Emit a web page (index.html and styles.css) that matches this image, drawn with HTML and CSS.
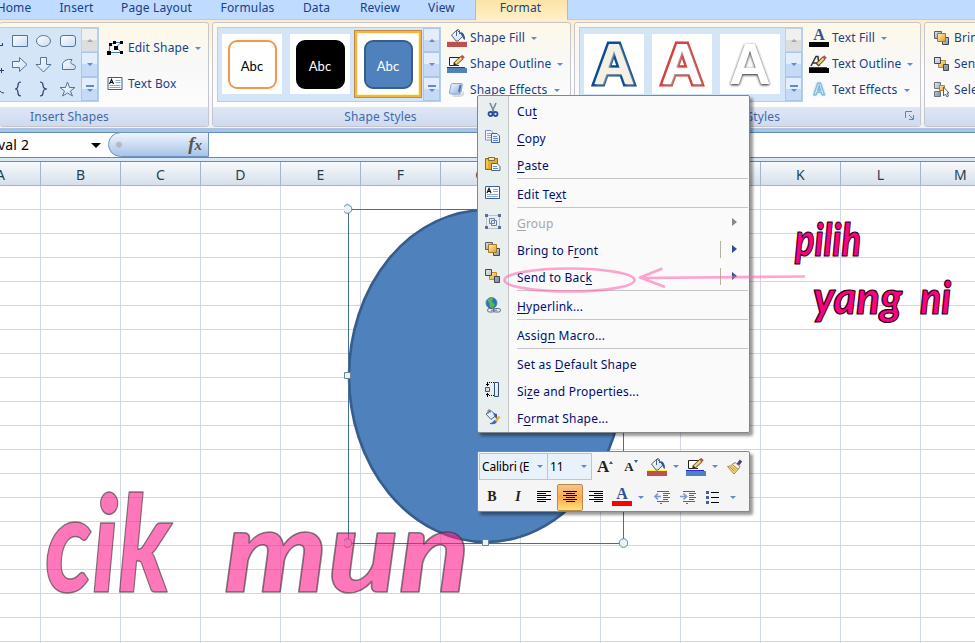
FILE: index.html
```html
<!DOCTYPE html>
<html lang="en">
<head>
    <meta charset="UTF-8">
    <title>Format Shape</title>
    <link rel="stylesheet" href="styles.css">
</head>
<body>
    <!-- Icons -->
    <svg class="defs">
        <defs>
            <linearGradient id="gold" x2="1" y2="1"><stop offset="0" stop-color="#fff0b8"/><stop offset="1" stop-color="#dc9c20"/></linearGradient>
            <linearGradient id="steel" x2="1" y2="1"><stop offset="0" stop-color="#e6ebf0"/><stop offset="1" stop-color="#7e8995"/></linearGradient>
            <linearGradient id="ice" x2="1" y2="1"><stop offset="0" stop-color="#fff"/><stop offset="1" stop-color="#c9dcf1"/></linearGradient>
            <linearGradient id="cube" x2="1" y2="1"><stop offset="0" stop-color="#f4f9ff"/><stop offset="1" stop-color="#8baee3"/></linearGradient>
        </defs>
        <symbol id="bucket" viewBox="0 0 20 13">
            <path d="M0 12.500h20" stroke="#ffef3a"/>
            <path d="M4.500 6 10 1l6 6-5 5H9z" fill="url(#ice)" stroke="#4a6285"/>
            <path d="M9.500 7V1.500q1.500-2 3 0V5" fill="none" stroke="#4a6285"/>
            <path d="M13 3q5 0 5 8-2-1-3-4z" fill="#33589b"/>
        </symbol>
        <symbol id="pencil" viewBox="0 0 20 13">
            <path d="M0 12.500h18" stroke="#2a2ae0"/>
            <path d="M14 2.500H2.500v8H12" fill="#fdfdfd" stroke="#222"/>
            <path d="M7.500 9.500 15 2.500" stroke="#5b4a20" stroke-width="4"/>
            <path d="M8.500 8.500 15 2.500" stroke="#f1d27a" stroke-width="2.400"/>
            <path d="m14.500 3 2-2" stroke="#b4564d" stroke-width="3.500"/>
            <path d="m6 11 1-3 2 2z" fill="#222"/>
        </symbol>
        <symbol id="textpencil" viewBox="0 0 20 13">
            <path d="M0 12.500h18" stroke="#2a2ae0"/>
            <path d="M2 11 7 1.500h2L10 11M4 8h5" fill="none" stroke="#333" stroke-width="1.500"/>
            <path d="M8 10 15 3" stroke="#5b4a20" stroke-width="4"/>
            <path d="m9 9 6-6" stroke="#f1d27a" stroke-width="2.400"/>
            <path d="m14.500 3.500 2-2" stroke="#b4564d" stroke-width="3.500"/>
        </symbol>
        <symbol id="effect" viewBox="0 0 16 16">
            <path d="M4 13h9l3-3v4l-3 2H5z" fill="#d9d9d9"/>
            <path d="M4.500 2.500H13q1.500 0 1.300 1.500L13 11q-.5 2-2 2H3q-2 0-1.500-2L3 4q.5-1.500 1.500-1.500z" fill="url(#cube)" stroke="#8ca5cf"/>
            <path d="m11 11 1.500-7" stroke="#5274b5" stroke-width="2"/>
        </symbol>
        <symbol id="front" viewBox="0 0 16 16">
            <path d="M.5 1.500h7v7h-7z" fill="url(#steel)" stroke="#56606b"/>
            <path d="M8.500 7.500h6v7h-6z" fill="url(#steel)" stroke="#3f4750"/>
            <path d="M3.500 3.500h8v8h-8z" fill="url(#gold)" stroke="#a57724"/>
        </symbol>
        <symbol id="back" viewBox="0 0 16 16">
            <path d="M4.500 4.500h7v7h-7z" fill="url(#gold)" stroke="#c08b2c"/>
            <path d="M.5 1.500h6v6h-6zM9.500 8.500h5v6h-5z" fill="url(#steel)" stroke="#3f4750"/>
        </symbol>
        <symbol id="pane" viewBox="0 0 16 16">
            <path d="M.5.5h6v6h-6zM.5 9.500h6v5h-6z" fill="url(#steel)" stroke="#6b747e"/>
            <path d="M5.500 3.500h5v5h-5z" fill="url(#gold)" stroke="#b0842c"/>
            <path d="M9.500 5v9l2-2 1.500 3 1.500-1-1.500-3H15z" fill="#fff" stroke="#506078"/>
        </symbol>
        <symbol id="editshape" viewBox="0 0 17 14">
            <path d="M3 3.500 7.500 1.500H14L9 6.500l5.500 5H2z" fill="#fff" stroke="#4677b8"/>
            <path d="M0 10h4v4H0zM2 2h3v3H2zM6 0h3v3H6zM13 0h3v3h-3zM7 5h4v4H7zM13 10h3v3h-3z"/>
        </symbol>
        <symbol id="textbox" viewBox="0 0 16 14">
            <path d="M.5.500h14v12H.5z" fill="#fff" stroke="#3c5f8c"/>
            <path d="M8 3.500h5M8 5.500h5M2 8.500h11M2 10.500h11" stroke="#8ba9d0"/>
            <path d="m2 7 2-4.500L6 7M3 5.500h2" fill="none" stroke="#111" stroke-width="1.200"/>
        </symbol>
        <symbol id="cut" viewBox="0 0 16 16">
            <path d="m5 1 4 9M11 1 7 10" stroke="#7688a0" stroke-width="1.600"/>
            <circle cx="5.500" cy="12" r="2" fill="none" stroke="#2c4f9c" stroke-width="1.800"/>
            <circle cx="10.500" cy="12" r="2" fill="none" stroke="#2c4f9c" stroke-width="1.800"/>
        </symbol>
        <symbol id="copy" viewBox="0 0 16 16">
            <path d="M.5 1.500H6l2.500 2.500v7h-8z" fill="#f3f8ff" stroke="#7792c0"/>
            <path d="M2 4.500h4M2 6.500h4M2 8.500h4" stroke="#8ba9d8"/>
            <path d="M6.500 4.500H12l2.500 2.500v6.500h-8z" fill="#eaf2ff" stroke="#3d62ae"/>
            <path d="M8 7.500h4M8 9.500h5M8 11.500h5" stroke="#6488ca"/>
        </symbol>
        <symbol id="paste" viewBox="0 0 16 16">
            <path d="M.5 2.500h12v11H.5z" fill="#e6ae28" stroke="#94690f"/>
            <path d="M2 4v8" stroke="#fbe08a"/>
            <path d="M3.500 1.500h6v3h-6z" fill="#f4e9a0" stroke="#80703a"/>
            <path d="M6.500 7.500H12l3 3v4H6.500z" fill="#f0f5fc" stroke="#52647e"/>
            <path d="M8 10.500h4M8 12.500h5" stroke="#7289ad"/>
        </symbol>
        <symbol id="group" viewBox="0 0 16 16">
            <path d="M1.500 1.500h13v13h-13z" fill="none" stroke="#8797b5" stroke-dasharray="1 1"/>
            <path d="M4.500 4.500h5v5h-5zM6.500 6.500h5v5h-5z" fill="none" stroke="#6c80a8"/>
            <path d="M0 0h3v3H0zM13 0h3v3h-3zM0 12h3v3H0zM13 12h3v3h-3z" fill="#5b6f98"/>
        </symbol>
        <symbol id="link" viewBox="0 0 16 16">
            <circle cx="6.500" cy="6" r="5.500" fill="#2d6fc0" stroke="#5488b5"/>
            <path d="M2 3q3-3 6-2L7 5l3 2-2 4-3-1-1-4z" fill="#58b457"/>
            <rect x="2.500" y="11.500" width="7" height="3.500" rx="1.700" fill="#e1e8ef" stroke="#5b708a"/>
            <rect x="8.500" y="11.500" width="7" height="3.500" rx="1.700" fill="#e1e8ef" stroke="#5b708a"/>
            <path d="M6 13.200h6" stroke="#5b708a"/>
        </symbol>
        <symbol id="size" viewBox="0 0 16 16">
            <path d="M2.500 0v4M1 2.500h3M2.500 11v4M1 12.500h3" stroke="#000"/>
            <path d="M4 .5h6M4 13.500h6" stroke="#000" stroke-dasharray="1 1"/>
            <path d="M.5 5.500h4v4h-4z" fill="#ddd" stroke="#555"/>
            <path d="M9.500.500h4v14h-4z" fill="url(#ice)" stroke="#314d78"/>
        </symbol>
        <symbol id="format" viewBox="0 0 16 16">
            <path d="m1 5 5-3.500 5 5-5 4z" fill="url(#ice)" stroke="#506a90"/>
            <path d="M3 5V1.500q1-1.500 2 0V4" fill="none" stroke="#506a90"/>
            <path d="m8 4 4 1v6l-2-3z" fill="#365ca4"/>
            <path d="m14.500 7.500-4 5" stroke="#e6b23c" stroke-width="2.500"/>
            <path d="M5 14q3 0 4-3l3 2q-2 3-7 2z" fill="#3866bb"/>
        </symbol>
        <symbol id="brush" viewBox="0 0 16 15">
            <path d="m11 5 3-4" stroke="#53407a" stroke-width="3"/>
            <path d="m8 3 5 4-2 3-6-5z" fill="#f4f4ea" stroke="#8c8468"/>
            <path d="m5.500 5 5.500 5-4 4.500L.5 7q3 0 5-2z" fill="#f3dc85" stroke="#ac8a2b"/>
            <path d="m3 7.500 4.500 4.500M5 7l4 4" stroke="#b38d2b"/>
        </symbol>
        <symbol id="lines" viewBox="0 0 14 12"><path d="M0 .5h14M0 2.500h9M0 4.500h14M0 6.500h9M0 8.500h14M0 10.500h9" stroke="#000"/></symbol>
        <symbol id="center" viewBox="0 0 14 12"><path d="M0 .5h14M3 2.500h9M0 4.500h14M3 6.500h9M0 8.500h14M3 10.500h9" stroke="#000"/></symbol>
        <symbol id="right" viewBox="0 0 14 12"><path d="M0 .5h14M5 2.500h9M0 4.500h14M5 6.500h9M0 8.500h14M5 10.500h9" stroke="#000"/></symbol>
        <symbol id="outdent" viewBox="0 0 16 13">
            <path d="M3 .5h12M9 2.500h7M9 4.500h5M9 6.500h7M9 8.500h5M3 10.500h12M6 12.500h2" stroke="#4d648f"/>
            <path d="M1 5.500h6M4 2.500l-3 3 3 3" fill="none" stroke="#7d9cca" stroke-width="1.700"/>
        </symbol>
        <symbol id="indent" viewBox="0 0 16 13">
            <path d="M3 .5h12M9 2.500h7M9 4.500h5M9 6.500h7M9 8.500h5M3 10.500h12M6 12.500h2" stroke="#4d648f"/>
            <path d="M0 5.500h6M3.500 2.500l3 3-3 3" fill="none" stroke="#7d9cca" stroke-width="1.700"/>
        </symbol>
        <symbol id="bullets" viewBox="0 0 14 13">
            <path d="M5 1.500h8M5 6.500h8M5 11.500h8" stroke="#000"/>
            <path d="M0 0h3v3H0zM0 5h3v3H0zM0 10h3v3H0z" fill="#46609c"/>
        </symbol>
    </svg>

    <nav class="tabs">
        <span class="tab tab-home">Home</span>
        <span class="tab tab-insert">Insert</span>
        <span class="tab tab-layout">Page Layout</span>
        <span class="tab tab-formulas">Formulas</span>
        <span class="tab tab-data">Data</span>
        <span class="tab tab-review">Review</span>
        <span class="tab tab-view">View</span>
        <span class="tab tab-format">Format</span>
    </nav>

    <div class="ribbon">
        <section class="group insert-shapes">
            <div class="group-body">
                <div class="gallery">
                    <svg class="shapes" width="81" height="74" viewBox="0 27 81 74">
                        <g fill="url(#ice)" stroke="#54759b">
                            <path d="M12.500 34.500h15v11h-15z"/>
                            <ellipse cx="43.500" cy="40" rx="7" ry="5.500"/>
                            <rect x="60.500" y="34.500" width="15" height="11" rx="2.500"/>
                            <path d="M12.500 60.500h7v-4l7.500 7-7.500 7v-4h-7z"/>
                            <path d="M40.500 56.500h6v7h4.500l-7.500 7.500-7.500-7.500h4.500z"/>
                            <path d="M62.500 68.500v-6q2-4 6-4h3.500q-3 4 1 5 4 1 1.500 5z"/>
                            <path d="m67.500 81 2 5.500h5.500l-4.500 3.500 2 5-5-3-5 3 2-5-4.500-3.500h5.500z"/>
                        </g>
                        <path d="M0 44.500h3M2.500 42v3M0 69.500h4M1.500 67v5M0 90q1 2 4 2" stroke="#2b3f70" fill="none"/>
                        <path d="M21 81q-3 0-3 3 0 4-3 4 3 0 3 4 0 3 3 3M40 81q3 0 3 3 0 4 4 4-4 0-4 4 0 3-3 3" fill="none" stroke="#2b3f70" stroke-width="1.200"/>
                    </svg>
                    <div class="scroll">
                        <span class="up off"></span><span class="down"></span><span class="more"></span>
                    </div>
                </div>
                <div class="commands wide">
                    <div class="command"><svg class="i17"><use href="#editshape"/></svg>Edit Shape<i class="caret"></i></div>
                    <div class="command"><svg class="i17"><use href="#textbox"/></svg>Text Box</div>
                </div>
            </div>
            <div class="group-title">Insert Shapes</div>
        </section>

        <section class="group shape-styles">
            <div class="group-body">
                <div class="gallery">
                    <div class="thumb"><span class="sample outline">Abc</span></div>
                    <div class="thumb"><span class="sample black">Abc</span></div>
                    <div class="thumb selected"><span class="sample blue">Abc</span></div>
                    <div class="scroll">
                        <span class="up"></span><span class="down"></span><span class="more"></span>
                    </div>
                </div>
                <div class="commands">
                    <div class="command"><span class="swatch fill"><svg><use href="#bucket"/></svg></span>Shape Fill<i class="caret"></i></div>
                    <div class="command"><span class="swatch line"><svg><use href="#pencil"/></svg></span>Shape Outline<i class="caret"></i></div>
                    <div class="command"><span class="swatch none"><svg><use href="#effect"/></svg></span>Shape Effects<i class="caret"></i></div>
                </div>
            </div>
            <div class="group-title">Shape Styles</div>
        </section>

        <section class="group text-styles">
            <div class="group-body">
                <div class="gallery">
                    <div class="thumb"><span class="wordart navy">A</span></div>
                    <div class="thumb"><span class="wordart red">A</span></div>
                    <div class="thumb"><span class="wordart white">A</span></div>
                    <div class="scroll">
                        <span class="up off"></span><span class="down"></span><span class="more"></span>
                    </div>
                </div>
                <div class="commands">
                    <div class="command"><span class="swatch ink"><b>A</b></span>Text Fill<i class="caret"></i></div>
                    <div class="command"><span class="swatch ink"><svg><use href="#textpencil"/></svg></span>Text Outline<i class="caret"></i></div>
                    <div class="command"><span class="swatch glow">A</span>Text Effects<i class="caret"></i></div>
                </div>
            </div>
            <div class="group-title">WordArt Styles
                <svg class="launcher" width="9" height="9"><path d="M.5 7V.5H7M8.500 4v4.500H4M4 4l4 4" fill="none" stroke="#5b86b5"/></svg>
            </div>
        </section>

        <section class="group arrange">
            <div class="group-body">
                <div class="commands">
                    <div class="command"><svg class="i16"><use href="#front"/></svg>Bring to Front</div>
                    <div class="command"><svg class="i16"><use href="#back"/></svg>Send to Back</div>
                    <div class="command"><svg class="i16"><use href="#pane"/></svg>Selection Pane</div>
                </div>
            </div>
            <div class="group-title"></div>
        </section>
    </div>

    <div class="formula-bar">
        <div class="name-box"><span class="name">Oval 2</span><i class="name-caret"></i></div>
        <div class="fx"><i class="dot"></i><span class="fx-label">f<small>x</small></span></div>
        <div class="formula"></div>
    </div>

    <div class="columns">
        <span class="col first">A</span><span class="col">B</span><span class="col">C</span><span class="col">D</span><span class="col">E</span><span class="col">F</span><span class="col">G</span><span class="col">H</span><span class="col">I</span><span class="col">J</span><span class="col">K</span><span class="col">L</span><span class="col">M</span>
    </div>

    <div class="sheet">
        <svg class="shape" width="284" height="344" viewBox="344 204 284 344">
            <ellipse cx="486" cy="376" rx="137" ry="166" fill="#4f81bd" stroke="#385d8a" stroke-width="2.700"/>
            <path d="M348.500 209.500h275v334h-275z" fill="none" stroke="#426e9b"/>
            <g fill="#e3f5f8" stroke="#6c8390">
                <circle cx="347.500" cy="209" r="4.300"/>
                <circle cx="623.500" cy="543" r="4.300"/>
                <circle cx="347.500" cy="543" r="4.300"/>
                <path d="M344.500 372.500h6v6h-6zM482.500 539.500h6v6h-6z"/>
            </g>
        </svg>
    </div>

    <!-- Context menu -->
    <div class="menu">
        <div class="item"><svg><use href="#cut"/></svg><span>Cu<u>t</u></span></div>
        <div class="item"><svg><use href="#copy"/></svg><span><u>C</u>opy</span></div>
        <div class="item"><svg><use href="#paste"/></svg><span><u>P</u>aste</span></div>
        <hr>
        <div class="item"><svg><use href="#textbox"/></svg><span>Edit Te<u>x</u>t</span></div>
        <hr>
        <div class="item disabled"><svg><use href="#group"/></svg><span><u>G</u>roup</span><i class="arrow"></i></div>
        <div class="item"><svg><use href="#front"/></svg><span>Bring to F<u>r</u>ont</span><i class="arrow split"></i></div>
        <div class="item"><svg><use href="#back"/></svg><span>Send to Bac<u>k</u></span><i class="arrow split"></i></div>
        <hr>
        <div class="item"><svg><use href="#link"/></svg><span><u>H</u>yperlink...</span></div>
        <hr>
        <div class="item"><svg></svg><span>Assig<u>n</u> Macro...</span></div>
        <hr>
        <div class="item"><svg></svg><span>Set as <u>D</u>efault Shape</span></div>
        <div class="item"><svg><use href="#size"/></svg><span>Si<u>z</u>e and Properties...</span></div>
        <div class="item"><svg><use href="#format"/></svg><span>F<u>o</u>rmat Shape...</span></div>
    </div>

    <!-- Mini toolbar -->
    <div class="mini">
        <div class="mini-row">
            <span class="combo font"><span class="combo-text">Calibri (E</span><i class="caret"></i></span>
            <span class="combo size"><span class="combo-text">11</span><i class="caret"></i></span>
            <span class="letter grow">A<i></i></span>
            <span class="letter shrink">A<i></i></span>
            <span class="swatch fill"><svg><use href="#bucket"/></svg></span><i class="caret"></i>
            <span class="swatch line"><svg><use href="#pencil"/></svg></span><i class="caret"></i>
            <svg class="brush"><use href="#brush"/></svg>
        </div>
        <div class="mini-row second">
            <span class="tool letter">B</span>
            <span class="tool letter italic">I</span>
            <span class="tool"><svg><use href="#lines"/></svg></span>
            <span class="tool active"><svg><use href="#center"/></svg></span>
            <span class="tool"><svg><use href="#right"/></svg></span>
            <span class="swatch font-color"><b>A</b></span><i class="caret"></i>
            <svg class="dent"><use href="#outdent"/></svg>
            <svg class="dent"><use href="#indent"/></svg>
            <svg class="bullets"><use href="#bullets"/></svg><i class="caret"></i>
        </div>
    </div>

    <!-- Notes drawn over the window -->
    <svg class="notes" width="975" height="643">
        <g fill="none" stroke="#ff69b0" stroke-opacity=".6" stroke-width="2.600">
            <ellipse cx="569.500" cy="280" rx="65" ry="11.500"/>
            <path d="M805 276.500 640 278M662.500 268.500 640 277.500 665 287"/>
        </g>
        <text class="note" x="795" y="256" textLength="66" lengthAdjust="spacingAndGlyphs">pilih</text>
        <text class="note" x="813" y="314" textLength="89" lengthAdjust="spacingAndGlyphs">yang</text>
        <text class="note" x="920" y="314" textLength="31" lengthAdjust="spacingAndGlyphs">ni</text>
        <text class="signature tall" x="45" y="592" textLength="126" lengthAdjust="spacingAndGlyphs">cik</text>
        <text class="signature" x="224" y="592" textLength="246" lengthAdjust="spacingAndGlyphs">mun</text>
    </svg>
</body>
</html>
```
FILE: styles.css
```css
* {
    box-sizing: border-box;
}
html {
    overflow: hidden;
}
body {
    margin: 0;
    width: 975px;
    height: 643px;
    overflow: hidden;
    position: relative;
    display: flex;
    flex-direction: column;
    background: #fff;
    color: #15428b;
    font: 12px/16px "Noto Sans", "Open Sans", sans-serif;
    letter-spacing: .15px;
    white-space: nowrap;
}
svg {
    flex: none;
}
.defs {
    position: absolute;
    width: 0;
    height: 0;
}

/* Tabs */
.tabs {
    display: flex;
    flex: none;
    height: 20px;
    background: #bfdbff;
    border-bottom: 1px solid #c9c9c4;
}
.tab {
    height: 19px;
    text-align: center;
    flex: none;
}
.tab-home { width: 46px; margin-left: -9px; }
.tab-insert { width: 79px; }
.tab-layout { width: 81px; }
.tab-formulas { width: 101px; }
.tab-data { width: 37px; }
.tab-review { width: 90px; }
.tab-view { width: 33px; }
.tab-format {
    width: 93px;
    margin-left: 17px;
    padding-right: 2px;
    height: 20px;
    background: linear-gradient(#fce3a6, #fff0c9);
    border: solid #d1b77d;
    border-width: 0 1px;
}

/* Ribbon */
.ribbon {
    display: flex;
    flex: none;
    gap: 3px;
    height: 108px;
    padding-top: 2px;
    background: linear-gradient(#feeccb, #fff 50%, #edf1f8);
    overflow: hidden;
}
.group {
    flex: none;
    height: 105px;
    display: flex;
    flex-direction: column;
    border: 1px solid #c4c6cc;
    border-radius: 3px;
    background: linear-gradient(#fef8e7, #f8f8f8 40%, #fff);
}
.insert-shapes { width: 209px; border-left: 0; }
.shape-styles { width: 359px; }
.text-styles { width: 347px; }
.arrange { width: 70px; }
.group-body {
    display: flex;
    flex: none;
    height: 84px;
    padding: 4px 0 0 4px;
}
.insert-shapes .group-body {
    padding-left: 0;
}
.group-title {
    height: 19px;
    background: linear-gradient(#dfe7f5, #cfdaef);
    color: #3e6aaa;
    line-height: 20px;
    text-align: center;
    position: relative;
}
.insert-shapes .group-title { padding-right: 69px; }
.shape-styles .group-title { padding-right: 22px; }
.text-styles .group-title { padding-right: 20px; }
.launcher {
    position: absolute;
    right: 6px;
    top: 4px;
}
.gallery {
    display: flex;
    flex: none;
    height: 75px;
    background: #d4e5f7;
    border: 1px solid #b3cfee;
}
.insert-shapes .gallery {
    border-left: 0;
}
.thumb {
    width: 60px;
    height: 60px;
    margin: 6px 4px 0;
    background: #fff;
    display: flex;
    align-items: center;
    justify-content: center;
}
.thumb.selected {
    box-shadow: 0 0 0 1px #fff2b5, 0 0 0 3px #f5b540, 0 0 0 4px #c18a49;
}
.sample {
    width: 49px;
    height: 49px;
    border-radius: 9px;
    border: 2px solid #f79646;
    line-height: 48px;
    text-align: center;
    color: #000;
    font-family: Lato, sans-serif;
    font-size: 13px;
}
.sample.black {
    background: #000;
    border-color: #000;
    color: #fff;
}
.sample.blue {
    background: #4f81bd;
    border-color: #385d8a;
    color: #fff;
}
.wordart {
    font: bold 58px/60px "Liberation Sans", sans-serif;
    text-shadow: 1px 1px 2px #aaa;
    paint-order: stroke;
}
.navy { color: #f3f0e4; -webkit-text-stroke: 5px #0b4a94; }
.red { color: #fff; -webkit-text-stroke: 5px #d7403d; }
.white { color: #fff; text-shadow: 0 1px 3px #444, 0 1px 2px #999; }
.scroll {
    width: 17px;
    margin-left: 1px;
    display: flex;
    flex-direction: column;
}
.shapes + .scroll {
    margin-left: 0;
}
.scroll span {
    flex: 1;
    display: flex;
    flex-direction: column;
    align-items: center;
    justify-content: center;
    gap: 2px;
    border: 1px solid #abc6ea;
    background: linear-gradient(#e3edfb 50%, #c6d9f5 50%);
}
.scroll span::after, .caret {
    content: "";
    border: 3px solid transparent;
    border-top: 3px solid #5f8bc6;
    border-bottom: 0;
}
.scroll .up::after {
    border-top: 0;
    border-bottom: 3px solid #5f8bc6;
}
.scroll .off {
    background: linear-gradient(#f0f0f0 50%, #dedede 50%);
    border-color: #c8cfd8;
}
.scroll .off::after {
    border-bottom-color: #a5a5a5;
}
.scroll .more::before {
    content: "";
    width: 8px;
    height: 2px;
    background: #5f8bc6;
}
.commands {
    padding: 3px 0 0 6px;
}
.command {
    display: flex;
    align-items: center;
    height: 26px;
}
.commands:not(.wide) .command:first-child {
    margin-top: -5px;
}
.commands.wide {
    padding: 3px 0 0 8px;
}
.wide .command {
    height: 36px;
}
.caret {
    flex: none;
    margin-left: 6px;
}
.i17 {
    width: 17px;
    height: 14px;
    margin-right: 4px;
}
.i16 {
    width: 16px;
    height: 16px;
    margin-right: 4px;
}
.arrange .commands {
    padding-left: 5px;
}
.swatch {
    flex: none;
    width: 20px;
    height: 18px;
    margin-right: 3px;
    border-bottom: 5px solid #c0504d;
    text-align: center;
}
.swatch svg {
    display: block;
    width: 20px;
    height: 13px;
}
.swatch b {
    display: block;
    font: bold 16px/12px "Liberation Serif", serif;
    color: #2d528f;
}
.swatch.line { border-color: #4f81bd; }
.swatch.ink { border-color: #000; }
.swatch.font-color { border-color: #f00; }
.swatch.none { border: 0; }
.swatch.none svg { width: 18px; height: 16px; }
.swatch.glow {
    border: 0;
    font: bold 16px/18px "Liberation Sans", sans-serif;
    color: #e8f5ff;
    -webkit-text-stroke: 1px #6dafd8;
    text-shadow: 0 0 3px #67b9e5;
}

/* Formula bar */
.formula-bar {
    display: flex;
    flex: none;
    height: 30px;
    margin-bottom: 3px;
    border-top: 4px solid #a9c3e3;
    border-bottom: 1px solid #5f8cb8;
    box-shadow: inset 0 1px #5f8cb8;
    background: #fff;
}
.name-box {
    width: 108px;
    display: flex;
    align-items: center;
    justify-content: space-between;
    padding: 1px 7px 0 0;
    color: #000;
    font-size: 14px;
}
.name {
    margin-left: -13px;
}
.name-caret {
    border: 5px solid transparent;
    border-top-color: #000;
    border-bottom: 0;
}
.fx {
    width: 101px;
    display: flex;
    align-items: center;
    justify-content: space-between;
    padding: 0 6px;
    border: 1px solid #6c94c1;
    border-radius: 13px 0 0 13px;
    background: linear-gradient(#f0f6fd, #a7c3e8);
}
.dot {
    width: 8px;
    height: 8px;
    border-radius: 50%;
    background: #b3b9c2;
    border: 1px solid #d5dae1;
}
.fx-label {
    font: italic bold 19px/20px "Liberation Serif", serif;
    letter-spacing: 0;
    color: #555;
}
.fx-label small {
    font-size: 15px;
}

/* Sheet */
.columns {
    display: flex;
    flex: none;
    height: 25px;
    overflow: hidden;
    border-top: 1px solid #5f8cb8;
    border-bottom: 1px solid #9eb6ce;
    background: linear-gradient(#f8fafc, #d6dfeb);
    box-shadow: 0 -3px #dbe8f8;
}
.col {
    flex: none;
    width: 80px;
    border-right: 1px solid #9eb6ce;
    text-align: center;
    color: #263f50;
    font-size: 14px;
    line-height: 25px;
}
.first {
    margin-left: -39px;
}
.sheet {
    flex: 1;
    position: relative;
    background-image: linear-gradient(90deg, transparent 79px, #d0d7e5 79px), linear-gradient(transparent 23px, #d0d7e5 23px);
    background-size: 80px 24px;
    background-position: -39px 0;
}
.shape {
    position: absolute;
    left: 344px;
    top: 18px;
}

/* Menu */
.menu {
    position: absolute;
    left: 477px;
    top: 95px;
    width: 273px;
    height: 338px;
    padding-top: 1px;
    border: 1px solid #868686;
    border-radius: 2px;
    background: linear-gradient(90deg, #e9eeee 30px, #c5c5c5 30px, #c5c5c5 31px, #fafafa 31px);
    box-shadow: 3px 3px 3px rgba(0, 0, 0, .4);
    color: #000f70;
    letter-spacing: .2px;
}
.item {
    display: flex;
    align-items: center;
    height: 27px;
    padding-top: 2px;
}
.item svg {
    width: 16px;
    height: 16px;
    margin: 0 16px 3px 7px;
}
.item u {
    text-underline-offset: 2px;
}
.menu hr {
    height: 2px;
    margin: 0 1px 0 39px;
    border: 0;
    border-top: 1px solid #c5c5c5;
}
.disabled {
    color: #a7a7a7;
}
.arrow {
    margin: -3px 0 0 auto;
    height: 17px;
    width: 29px;
    padding-left: 11px;
    display: flex;
    align-items: center;
}
.arrow::after {
    content: "";
    border: 4px solid transparent;
    border-left: 5px solid #314f96;
    border-right: 0;
}
.disabled .arrow {
    padding-left: 12px;
}
.disabled .arrow::after {
    border-left-color: #888;
}
.split {
    border-left: 1px solid #b6b49c;
}

/* Mini toolbar */
.mini {
    position: absolute;
    left: 477px;
    top: 451px;
    width: 273px;
    height: 61px;
    padding: 1px;
    border: 1px solid #868686;
    border-radius: 2px;
    background: #f5f5f5;
    box-shadow: 3px 3px 3px rgba(0, 0, 0, .4);
    color: #000;
    letter-spacing: 0;
}
.mini-row {
    display: flex;
    align-items: center;
    height: 27px;
}
.mini .caret {
    margin-left: 4px;
}
.combo {
    display: flex;
    align-items: center;
    height: 27px;
    padding: 0 4px 0 2px;
    border: 1px solid #aec8e8;
    background: #e9f1fb;
}
.combo-text {
    flex: 1;
    overflow: hidden;
}
.font { width: 69px; }
.font .combo-text { letter-spacing: -.2px; }
.size { width: 44px; border-left: 0; }
.letter {
    font: bold 14px/16px "Liberation Serif", serif;
    color: #222;
}
.grow { margin-left: 5px; font-size: 17px; }
.shrink { margin-left: 11px; font-size: 13px; }
.letter i {
    display: inline-block;
    vertical-align: 8px;
    border: 2px solid transparent;
    border-bottom: 3px solid #36558f;
    border-top: 0;
}
.shrink i {
    border-top: 3px solid #36558f;
    border-bottom: 0;
}
.mini .swatch {
    margin-right: 2px;
}
.shrink + .swatch { margin-left: 9px; }
.caret + .swatch { margin-left: 7px; }
.brush {
    width: 16px;
    height: 16px;
    margin-left: 9px;
}
.second {
    height: 30px;
    margin-top: 2px;
}
.tool {
    width: 26px;
    height: 27px;
    display: flex;
    align-items: center;
    justify-content: center;
}
.tool svg {
    width: 14px;
    height: 12px;
}
.italic { font-style: italic; }
.active {
    border: 1px solid #b68b4d;
    border-radius: 2px;
    background: linear-gradient(#f8c48a, #fba94c 50%, #ffe27a);
}
.second .swatch { margin-left: 3px; }
.dent {
    width: 16px;
    height: 13px;
    margin-left: 10px;
}
.bullets {
    width: 14px;
    height: 13px;
    margin: 0 6px 0 10px;
}

/* Notes */
.notes {
    position: absolute;
    left: 0;
    top: 0;
    letter-spacing: 0;
    stroke-linejoin: round;
}
.note {
    font: italic 900 46px Lato, sans-serif;
    fill: #ff0080;
    stroke: #1c0010;
    stroke-width: 1.200px;
}
.signature {
    font: italic 900 115px Lato, sans-serif;
    fill: #ff1c8d;
    fill-opacity: .6;
    stroke: #333;
    stroke-opacity: .6;
    stroke-width: 1.500px;
}
.tall {
    font-size: 134px;
}
```
